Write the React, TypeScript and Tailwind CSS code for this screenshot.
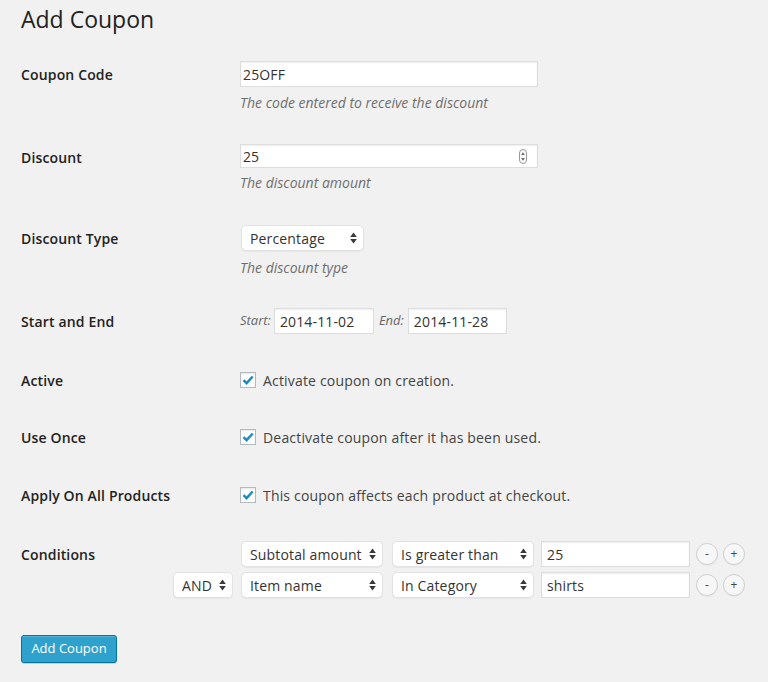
import React from 'react';

const font = { fontFamily: '"Open Sans", "Liberation Sans", sans-serif' };

const SelectArrows = () => (
  <svg width="7" height="12" viewBox="0 0 7 12" className="shrink-0">
    <path d="M3.5 0.5L6.8 5H0.2z M0.2 7h6.6L3.5 11.5z" fill="#3a3a3a" />
  </svg>
);

const Spinner = () => (
  <svg width="8" height="15" viewBox="0 0 8 15" className="shrink-0">
    <rect x="0.5" y="0.5" width="7" height="14" rx="3.5" fill="#fafafa" stroke="#9a9a9a" />
    <path d="M4 3.3L5.8 6H2.2z M2.2 9h3.6L4 11.7z" fill="#666" />
  </svg>
);

const Check = () => (
  <span className="flex h-4 w-4 shrink-0 items-center justify-center border border-[#b4b9be] bg-white shadow-[inset_0_1px_2px_rgba(0,0,0,0.1)]">
    <svg width="14" height="14" viewBox="0 0 14 14">
      <path d="M2.5 7.1L5.6 10.2L11.7 3.5" fill="none" stroke="#1e8cbe" strokeWidth="2.5" />
    </svg>
  </span>
);

const FakeSelect = ({ label, width }: { label: string; width: string }) => (
  <div
    className={`flex h-[26px] ${width} shrink-0 items-center justify-between rounded-[5px] border border-[#e2e2e2] bg-white pl-[8px] pr-[6px] text-[14px] tracking-[0.15px] text-[#333] shadow-[0_1px_1px_rgba(0,0,0,0.05)]`}
  >
    <span className="truncate">{label}</span>
    <SelectArrows />
  </div>
);

const TextBox = ({ value, className }: { value: string; className: string }) => (
  <input
    readOnly
    value={value}
    className={`h-[26px] shrink-0 border border-[#ddd] bg-white text-[14px] tracking-[0.15px] text-[#333] shadow-[inset_0_1px_2px_rgba(0,0,0,0.07)] outline-none ${className}`}
    style={font}
  />
);

const RoundBtn = ({ sign, className }: { sign: string; className: string }) => (
  <span
    className={`flex h-[22px] w-[22px] shrink-0 items-center justify-center rounded-full border border-[#d0d0d0] bg-[#f7f7f7] text-[12px] leading-none text-[#444] shadow-[0_1px_0_rgba(0,0,0,0.04)] ${className}`}
  >
    {sign}
  </span>
);

const Row = ({ label, top, children }: { label: string; top: string; children: React.ReactNode }) => (
  <div className={`flex ${top}`}>
    <div className="flex h-[26px] w-[219px] shrink-0 items-center text-[14px] font-semibold tracking-[0.15px] text-[#222]">
      {label}
    </div>
    <div className="flex flex-col">{children}</div>
  </div>
);

const Desc = ({ text, mt }: { text: string; mt: string }) => (
  <p className={`${mt} text-[14px] leading-[20px] italic text-[#6f6f6f]`}>{text}</p>
);

const CheckLine = ({ text }: { text: string }) => (
  <div className="flex h-[26px] items-center gap-[7px] text-[14px] tracking-[0.18px] text-[#444]">
    <Check />
    <span>{text}</span>
  </div>
);

export default function App() {
  return (
    <div className="min-h-screen w-full bg-[#f1f1f1] pl-[21px]" style={font}>
      <h1 className="pt-[5px] text-[23px] leading-[29px] font-normal text-[#222]">Add Coupon</h1>

      <Row label="Coupon Code" top="mt-[27px]">
        <TextBox value="25OFF" className="w-[298px] pl-[2px]" />
        <Desc text="The code entered to receive the discount" mt="mt-[6px]" />
      </Row>

      <Row label="Discount" top="mt-[31px]">
        <div className="flex h-[24px] w-[298px] items-center justify-between border border-[#ddd] bg-white pl-[2px] pr-[10px] text-[14px] text-[#333] shadow-[inset_0_1px_2px_rgba(0,0,0,0.07)]">
          <span>25</span>
          <Spinner />
        </div>
        <Desc text="The discount amount" mt="mt-[5px]" />
      </Row>

      <Row label="Discount Type" top="mt-[32px]">
        <div className="ml-[1px]">
          <FakeSelect label="Percentage" width="w-[123px]" />
        </div>
        <Desc text="The discount type" mt="mt-[7px]" />
      </Row>

      <Row label="Start and End" top="mt-[30px]">
        <div className="flex items-center">
          <span className="text-[13px] italic text-[#666]">Start:</span>
          <TextBox value="2014-11-02" className="ml-[3px] w-[100px] px-[5px]" />
          <span className="ml-[5px] text-[13px] italic text-[#666]">End:</span>
          <TextBox value="2014-11-28" className="ml-[4px] w-[99px] px-[5px]" />
        </div>
      </Row>

      <Row label="Active" top="mt-[33px]">
        <CheckLine text="Activate coupon on creation." />
      </Row>

      <Row label="Use Once" top="mt-[31px]">
        <CheckLine text="Deactivate coupon after it has been used." />
      </Row>

      <Row label="Apply On All Products" top="mt-[32px]">
        <CheckLine text="This coupon affects each product at checkout." />
      </Row>

      <Row label="Conditions" top="mt-[33px]">
        <div className="flex items-center pl-[1px]">
          <FakeSelect label="Subtotal amount" width="w-[142px]" />
          <div className="ml-[9px]">
            <FakeSelect label="Is greater than" width="w-[142px]" />
          </div>
          <TextBox value="25" className="ml-[7px] w-[149px] px-[5px]" />
          <RoundBtn sign="-" className="ml-[6px]" />
          <RoundBtn sign="+" className="ml-[5px]" />
        </div>
        <div className="-ml-[67px] mt-[5px] flex items-center">
          <FakeSelect label="AND" width="w-[60px]" />
          <div className="ml-[8px]">
            <FakeSelect label="Item name" width="w-[142px]" />
          </div>
          <div className="ml-[9px]">
            <FakeSelect label="In Category" width="w-[142px]" />
          </div>
          <TextBox value="shirts" className="ml-[7px] w-[149px] px-[5px]" />
          <RoundBtn sign="-" className="ml-[6px]" />
          <RoundBtn sign="+" className="ml-[5px]" />
        </div>
      </Row>

      <button className="mt-[37px] h-[28px] w-[96px] rounded-[3px] border border-[#0074a2] bg-[#2ea2cc] text-[13px] text-white shadow-[inset_0_1px_0_rgba(120,200,230,0.5),0_1px_0_rgba(0,0,0,0.15)]">
        Add Coupon
      </button>
    </div>
  );
}
